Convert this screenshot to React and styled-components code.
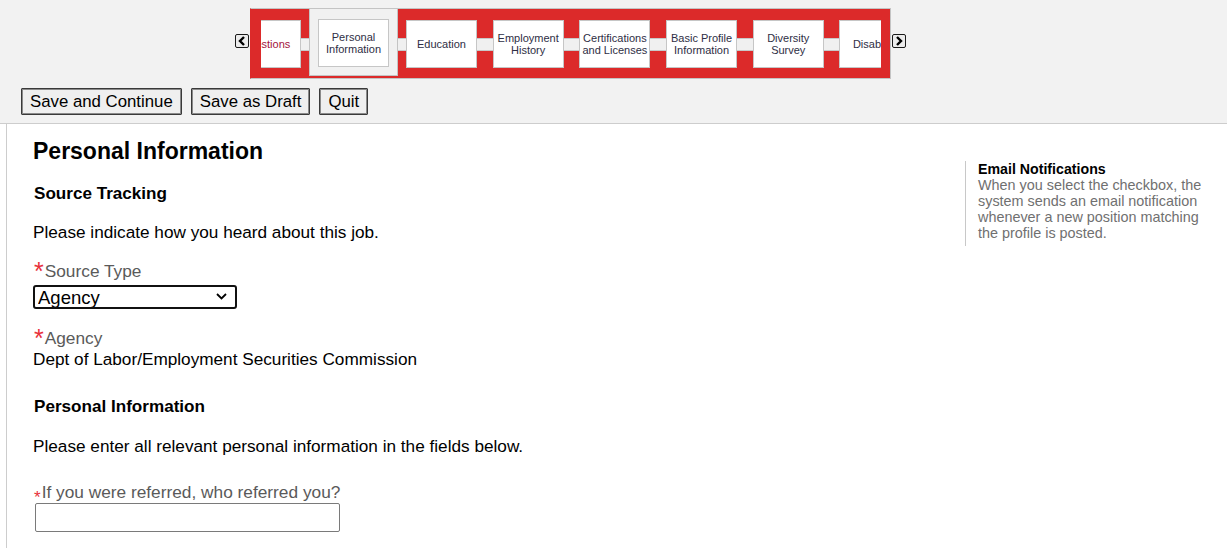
import React from 'react';
import styled, { createGlobalStyle } from 'styled-components';

const GlobalStyle = createGlobalStyle`
  html, body {
    margin: 0;
    padding: 0;
    background: #fff;
    font-family: "Liberation Sans", Arial, sans-serif;
    color: #000;
  }
`;

const steps = [
  { id: 'q', label: 'Questions', tone: 'visited' },
  { id: 'pi', label: 'Personal Information', active: true },
  { id: 'ed', label: 'Education' },
  { id: 'eh', label: 'Employment History' },
  { id: 'cl', label: 'Certifications and Licenses' },
  { id: 'bp', label: 'Basic Profile Information' },
  { id: 'ds', label: 'Diversity Survey' },
  { id: 'di', label: 'Disability' },
];

const Header = styled.div`
  background: #f2f2f2;
  border-bottom: 1px solid #cdcdcd;
  padding: 8px 0 8px 21px;
`;

const CarouselRow = styled.div`
  display: flex;
  align-items: center;
  margin-left: 214px;
  height: 71px;
`;

const ArrowButton = styled.button`
  width: 14px;
  height: 14px;
  padding: 0;
  margin: 0 ${p => (p.$side === 'left' ? '1px' : '0')} 5px ${p => (p.$side === 'right' ? '1px' : '0')};
  border: 1px solid #1a1a1a;
  border-radius: 2px;
  background: #ececec;
  display: flex;
  align-items: center;
  justify-content: center;
`;

const Frame = styled.div`
  width: 641px;
  height: 71px;
  box-sizing: border-box;
  background: #dc2a2a;
  border: 1px solid #c4c4c4;
  border-left-color: #dc2a2a;
  padding: 0 9px 0 10px;
`;

const Viewport = styled.div`
  overflow: hidden;
  height: 100%;
`;

const Track = styled.div`
  display: flex;
  align-items: center;
  height: 100%;
  margin-left: -31px;
`;

const StepBox = styled.div`
  flex: 0 0 71px;
  height: 48px;
  box-sizing: border-box;
  background: #fff;
  border: 1px solid #c6c6c6;
  display: flex;
  align-items: center;
  justify-content: center;
  text-align: center;
  font-size: 11px;
  line-height: 12px;
  color: ${p => (p.$tone === 'visited' ? '#a3123d' : '#2e2e44')};
  white-space: ${p => (p.$nowrap ? 'nowrap' : 'normal')};
`;

const ActiveStep = styled.div`
  flex: 0 0 89px;
  align-self: flex-start;
  margin-top: -1px;
  height: 68px;
  box-sizing: border-box;
  background: #f1f1f1;
  border: 1px solid #c4c4c4;
  padding: 10px 8px 0;
`;

const Connector = styled.div`
  flex: 0 0 ${p => p.$w}px;
  height: 13px;
  box-sizing: border-box;
  background: #f0f0f0;
  border-top: 1px solid #c8c8c8;
  border-bottom: 1px solid #c8c8c8;
  margin-top: 2px;
`;

const ButtonRow = styled.div`
  display: flex;
  gap: 9px;
  margin-top: 9px;
`;

const ActionButton = styled.button`
  height: 27px;
  padding: 0 8px;
  font-family: "Liberation Sans", Arial, sans-serif;
  font-size: 16.8px;
  color: #000;
  background: #efefef;
  border: 1px solid #3a3a3a;
  box-shadow: inset 0 0 0 1px #8a8a8a;
  border-radius: 1px;
`;

const Main = styled.div`
  display: flex;
  margin-left: 6px;
  border-left: 1px solid #cdcdcd;
  min-height: 424px;
`;

const Content = styled.div`
  flex: 1;
  padding-left: 26px;
`;

const PageTitle = styled.h1`
  margin: 14px 0 0;
  font-size: 23px;
  line-height: 26px;
  font-weight: bold;
`;

const SectionTitle = styled.h2`
  margin: ${p => p.$gap}px 0 0 1px;
  font-size: 17.1px;
  line-height: 20px;
  font-weight: bold;
`;

const Text = styled.p`
  margin: ${p => p.$gap}px 0 0;
  font-size: 17.2px;
  line-height: 20px;
`;

const Label = styled.div`
  margin: ${p => p.$gap}px 0 0 1px;
  font-size: 17.3px;
  line-height: 20px;
  color: #5a5a5a;
  display: flex;
  align-items: flex-start;
`;

const Required = styled.span`
  color: #e8313b;
  font-size: ${p => (p.$small ? '17px' : '25px')};
  line-height: 20px;
  margin-right: 1px;
  transform: translateY(${p => (p.$small ? '6px' : '0')});
`;

const SelectWrap = styled.div`
  position: relative;
  width: 204px;
  margin-top: 4px;
`;

const Select = styled.select`
  appearance: none;
  -webkit-appearance: none;
  width: 100%;
  height: 24px;
  box-sizing: border-box;
  border: 2px solid #111;
  border-radius: 3px;
  background: #fff;
  padding: 0 0 0 3px;
  font-family: "Liberation Sans", Arial, sans-serif;
  font-size: 18.5px;
  color: #000;
`;

const Chevron = styled.svg`
  position: absolute;
  right: 10px;
  top: 8px;
  pointer-events: none;
`;

const TextInput = styled.input`
  display: block;
  width: 305px;
  height: 29px;
  box-sizing: border-box;
  margin: 1px 0 0 2px;
  border: 1px solid #7a7a7a;
  border-radius: 2px;
`;

const Aside = styled.aside`
  width: 236px;
  margin: 37px 13px 0 0;
  align-self: flex-start;
  border-left: 1px solid #c8c8c8;
  padding: 0 0 5px 12px;
  font-size: 14.4px;
  line-height: 16px;
`;

const AsideTitle = styled.div`
  font-weight: bold;
  font-size: 14.2px;
  color: #000;
`;

const AsideText = styled.div`
  color: #707070;
`;

const ArrowIcon = ({ dir }) => (
  <svg width="8" height="10" viewBox="0 0 8 10">
    <polyline
      points={dir === 'left' ? '6,1 2,5 6,9' : '2,1 6,5 2,9'}
      fill="none"
      stroke="#000"
      strokeWidth="2.4"
    />
  </svg>
);

const Carousel = () => (
  <CarouselRow>
    <ArrowButton $side="left" aria-label="previous"><ArrowIcon dir="left" /></ArrowButton>
    <Frame>
      <Viewport>
        <Track>
          {steps.map((s, i) => {
            const next = steps[i + 1];
            const connW = s.active || (next && next.active) ? 8 : 15.7;
            return (
              <React.Fragment key={s.id}>
                {s.active ? (
                  <ActiveStep>
                    <StepBox>{s.label}</StepBox>
                  </ActiveStep>
                ) : (
                  <StepBox $tone={s.tone} $nowrap={s.id === 'q' || s.id === 'di'}>{s.label}</StepBox>
                )}
                {next && <Connector $w={connW} />}
              </React.Fragment>
            );
          })}
        </Track>
      </Viewport>
    </Frame>
    <ArrowButton $side="right" aria-label="next"><ArrowIcon dir="right" /></ArrowButton>
  </CarouselRow>
);

export default function App() {
  return (
    <>
      <GlobalStyle />
      <Header>
        <Carousel />
        <ButtonRow>
          <ActionButton>Save and Continue</ActionButton>
          <ActionButton>Save as Draft</ActionButton>
          <ActionButton>Quit</ActionButton>
        </ButtonRow>
      </Header>
      <Main>
        <Content>
          <PageTitle>Personal Information</PageTitle>
          <SectionTitle $gap={20}>Source Tracking</SectionTitle>
          <Text $gap={18}>Please indicate how you heard about this job.</Text>
          <Label $gap={19}><Required>*</Required>Source Type</Label>
          <SelectWrap>
            <Select defaultValue="Agency">
              <option>Agency</option>
              <option>Job Board</option>
              <option>Referral</option>
            </Select>
            <Chevron width="11" height="7" viewBox="0 0 11 7">
              <polyline points="1,1 5.5,5.5 10,1" fill="none" stroke="#000" strokeWidth="1.8" />
            </Chevron>
          </SelectWrap>
          <Label $gap={19}><Required>*</Required>Agency</Label>
          <Text $gap={1}>Dept of Labor/Employment Securities Commission</Text>
          <SectionTitle $gap={28}>Personal Information</SectionTitle>
          <Text $gap={19}>Please enter all relevant personal information in the fields below.</Text>
          <Label $gap={26}><Required $small>*</Required>If you were referred, who referred you?</Label>
          <TextInput type="text" />
        </Content>
        <Aside>
          <AsideTitle>Email Notifications</AsideTitle>
          <AsideText>
            When you select the checkbox, the system sends an email notification whenever a new position matching the profile is posted.
          </AsideText>
        </Aside>
      </Main>
    </>
  );
}
